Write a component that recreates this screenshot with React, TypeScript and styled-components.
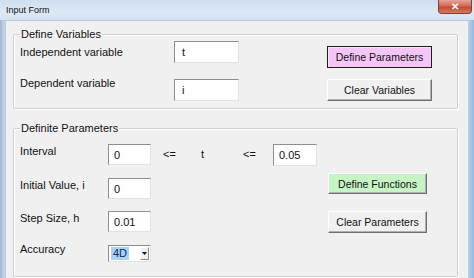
import React from "react"
import styled, { createGlobalStyle, css } from "styled-components"

const GlobalStyle = createGlobalStyle`
  html, body {
    margin: 0;
    padding: 0;
    background: #c9dbee;
  }
  body {
    font-family: "Liberation Sans", Arial, sans-serif;
    color: #1a1a1a;
  }
`

const Window = styled.div`
  width: 474px;
  height: 278px;
  display: flex;
  flex-direction: column;
  padding: 0 6px 0 5px;
  box-sizing: border-box;
  overflow: hidden;
  background: linear-gradient(
    to right,
    #9fb7cf 0,
    #c6d9ec 5px,
    #d8e6f3 60%,
    #cfe0f1 98%,
    #8fbbe3 100%
  );
`

const TitleBar = styled.div`
  height: 20px;
  display: flex;
  justify-content: space-between;
  align-items: flex-start;
  margin: 0 -6px 0 -5px;
  padding-left: 6px;
  background: linear-gradient(to bottom, #cfdff0 0, #dce8f5 60%, #d2e2f2 100%);
`

const Title = styled.span`
  font-size: 9px;
  line-height: 20px;
  color: #111;
`

const CloseButton = styled.div`
  width: 34px;
  height: 14px;
  margin-right: 2px;
  display: flex;
  align-items: center;
  justify-content: center;
  border: 1px solid #8a3a30;
  border-top: none;
  border-radius: 0 0 4px 4px;
  background: linear-gradient(to bottom, #e8a294 0, #d46a55 45%, #c24a33 55%, #d77a62 100%);
  color: #fff;
  font-size: 10px;
  font-weight: bold;
  box-sizing: border-box;
`

const Client = styled.div`
  flex: 1;
  display: flex;
  flex-direction: column;
  gap: 12px;
  padding: 6px 10px 0 7px;
  background: #f0f0f0;
  border-top: 1px solid #b9c9da;
  border-left: 1px solid #b9c9da;
  box-sizing: border-box;
`

const GroupBox = styled.fieldset<{ $pad: string }>`
  margin: 0;
  padding: ${(p) => p.$pad};
  border: 1px solid #d0d0d0;
  border-radius: 2px;
  box-shadow: inset 1px 1px 0 #fff, 1px 1px 0 #fff;
  display: flex;
  flex-direction: column;
  min-width: 0;
`

const Legend = styled.legend`
  padding: 0 1px;
  font-size: 11px;
  line-height: 14px;
  color: #111;
`

const Rows = styled.div<{ $gap: number }>`
  display: flex;
  flex-direction: column;
  gap: ${(p) => p.$gap}px;
`

const Row = styled.div`
  display: flex;
  align-items: flex-start;
`

const Label = styled.span<{ $w: number; $dy?: number }>`
  width: ${(p) => p.$w}px;
  flex-shrink: 0;
  font-size: 11px;
  line-height: 14px;
  margin-top: ${(p) => p.$dy ?? 0}px;
  color: #111;
`

const TextBox = styled.div<{ $w: number; $h: number; $pl?: number }>`
  width: ${(p) => p.$w}px;
  height: ${(p) => p.$h}px;
  box-sizing: border-box;
  flex-shrink: 0;
  padding: 3px 0 0 ${(p) => p.$pl ?? 5}px;
  background: #fff;
  border: 1px solid;
  border-color: #8e8e8e #e2e2e2 #e2e2e2 #8e8e8e;
  font-size: 11px;
  line-height: 14px;
  color: #111;
`

const Op = styled.span<{ $w: number; $ml?: number }>`
  width: ${(p) => p.$w}px;
  margin-left: ${(p) => p.$ml ?? 0}px;
  flex-shrink: 0;
  font-size: 11px;
  line-height: 21px;
  color: #111;
`

const raised = css`
  border: 1px solid;
  border-color: #fff #6f6f6f #6f6f6f #fff;
  box-shadow: inset -1px -1px 0 #b0b0b0;
`

const Button = styled.div<{ $tone: "pink" | "green" | "plain"; $w: number; $h: number; $dy?: number }>`
  margin-left: auto;
  margin-top: ${(p) => p.$dy ?? 0}px;
  width: ${(p) => p.$w}px;
  height: ${(p) => p.$h}px;
  box-sizing: border-box;
  display: flex;
  align-items: center;
  justify-content: center;
  font-size: 10.5px;
  color: #111;
  ${(p) =>
    p.$tone === "pink"
      ? css`
          background: #f5c5f5;
          border: 1px solid #1e1e1e;
          box-shadow: inset 1px 1px 0 #fbe4fb;
        `
      : p.$tone === "green"
      ? css`
          background: #c6f4c4;
          ${raised}
        `
      : css`
          background: #f0f0f0;
          ${raised}
        `}
`

const Combo = styled.div`
  width: 43px;
  height: 17px;
  box-sizing: border-box;
  display: flex;
  align-items: center;
  padding: 0 1px 0 2px;
  background: #fff;
  border: 1px solid;
  border-color: #8e8e8e #e2e2e2 #e2e2e2 #8e8e8e;
`

const Selected = styled.span`
  background: #a9d2f5;
  color: #0d2a66;
  font-size: 11px;
  line-height: 13px;
  padding: 0 2px;
`

const DropArrow = styled.span`
  margin-left: auto;
  width: 9px;
  height: 13px;
  display: flex;
  align-items: center;
  justify-content: center;
  background: #f0f0f0;
  border: 1px solid;
  border-color: #fff #8a8a8a #8a8a8a #fff;
  box-sizing: border-box;
`

const ArrowIcon = () => (
  <svg width="5" height="3" viewBox="0 0 5 3">
    <path d="M0 0H5L2.5 3Z" fill="#111" />
  </svg>
)

export default function App() {
  return (
    <>
      <GlobalStyle />
      <Window>
        <TitleBar>
          <Title>Input Form</Title>
          <CloseButton>✕</CloseButton>
        </TitleBar>
        <Client>
          <GroupBox $pad="0 25px 7px 6px">
            <Legend>Define Variables</Legend>
            <Rows $gap={11}>
              <Row>
                <Label $w={154} $dy={4}>Independent variable</Label>
                <TextBox $w={65} $h={22} $pl={7}>t</TextBox>
                <Button $tone="pink" $w={105} $h={22} $dy={5}>Define Parameters</Button>
              </Row>
              <Row>
                <Label $w={154} $dy={-3}>Dependent variable</Label>
                <TextBox $w={65} $h={22} $pl={7}>i</TextBox>
                <Button $tone="plain" $w={105} $h={22}>Clear Variables</Button>
              </Row>
            </Rows>
          </GroupBox>

          <GroupBox $pad="9px 30px 14px 6px">
            <Legend>Definite Parameters</Legend>
            <Rows $gap={12}>
              <Row>
                <Label $w={88}>Interval</Label>
                <TextBox $w={43} $h={21}>0</TextBox>
                <Op $w={38} $ml={12}>&lt;=</Op>
                <Op $w={42}>t</Op>
                <Op $w={30}>&lt;=</Op>
                <TextBox $w={44} $h={22}>0.05</TextBox>
              </Row>
              <Row>
                <Label $w={88}>Initial Value, i</Label>
                <TextBox $w={43} $h={21}>0</TextBox>
                <Button $tone="green" $w={99} $h={21} $dy={-5}>Define Functions</Button>
              </Row>
              <Row>
                <Label $w={88}>Step Size, h</Label>
                <TextBox $w={43} $h={21}>0.01</TextBox>
                <Button $tone="plain" $w={99} $h={22}>Clear Parameters</Button>
              </Row>
              <Row>
                <Label $w={88} $dy={-3}>Accuracy</Label>
                <Combo>
                  <Selected>4D</Selected>
                  <DropArrow>
                    <ArrowIcon />
                  </DropArrow>
                </Combo>
              </Row>
            </Rows>
          </GroupBox>
        </Client>
      </Window>
    </>
  )
}
